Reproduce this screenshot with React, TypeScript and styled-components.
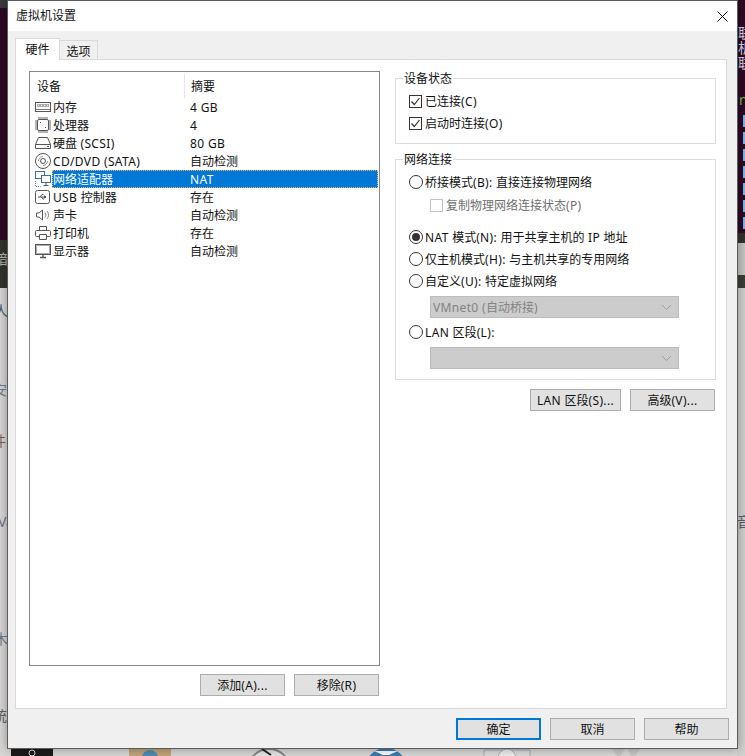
import React from "react";
import styled, { createGlobalStyle } from "styled-components";

const GlobalStyle = createGlobalStyle`
  html, body { margin: 0; padding: 0; background: #d6d6d6; }
  body { font-family: "Noto Sans", "Noto Sans CJK SC", sans-serif; font-size: 12px; color: #111; }
`;

const Desktop = styled.div`
  position: relative;
  width: 745px;
  height: 756px;
  overflow: hidden;
  background: #d8d8d6;
`;
const LeftStrip = styled.div`
  position: absolute;
  left: 0;
  top: 0;
  width: 8px;
  height: 756px;
  background: linear-gradient(#3a3a3a 0 8px, #2c0a24 8px 240px, #33332e 240px 288px, #d8d7d5 288px);
`;
const RightStrip = styled.div`
  position: absolute;
  right: 0;
  top: 0;
  width: 8px;
  height: 756px;
  background: linear-gradient(#2c0a24 0 233px, #34342f 233px 243px, #c6c6c4 243px 275px, #3c3c37 275px 288px, #d0d0ce 288px);
`;
const BlueBars = styled.div`
  position: absolute;
  right: 0;
  top: 115px;
  width: 2px;
  height: 114px;
  background: repeating-linear-gradient(#7fb6e6 0 12px, transparent 12px 17px);
`;
const Fragment = styled.span<{ $x: number; $y: number; $c: string }>`
  position: absolute;
  left: ${(p) => p.$x}px;
  top: ${(p) => p.$y}px;
  color: ${(p) => p.$c};
  font-size: 14px;
  line-height: 15px;
  white-space: pre;
`;
const DockIcon = styled.svg<{ $x: number }>`
  position: absolute;
  left: ${(p) => p.$x}px;
  top: 748px;
`;

const Dialog = styled.div`
  position: absolute;
  left: 7px;
  top: 0;
  width: 731px;
  height: 749px;
  box-sizing: border-box;
  border: 1px solid #5c5c5c;
  background: #f0f0f0;
  box-shadow: 0 0 10px rgba(0, 0, 0, 0.35);
  display: flex;
  flex-direction: column;
`;
const TitleBar = styled.div`
  height: 30px;
  flex: none;
  background: #fff;
  display: flex;
  align-items: center;
  justify-content: space-between;
  padding: 0 9px 0 8px;
`;
const Title = styled.span`
  font-size: 12px;
  line-height: 16px;
  color: #111;
`;
const Body = styled.div`
  flex: 1;
  display: flex;
  flex-direction: column;
  padding: 7px 8px 8px 7px;
  min-height: 0;
`;
const Tabs = styled.div`
  display: flex;
  align-items: flex-end;
  height: 21px;
  flex: none;
`;
const Tab = styled.div<{ $active?: boolean }>`
  box-sizing: border-box;
  position: relative;
  z-index: ${(p) => (p.$active ? 2 : 1)};
  height: ${(p) => (p.$active ? 22 : 19)}px;
  margin-bottom: ${(p) => (p.$active ? -1 : 0)}px;
  width: ${(p) => (p.$active ? 45 : 38)}px;
  background: ${(p) => (p.$active ? "#fff" : "#f0f0f0")};
  border: 1px solid #d9d9d9;
  border-bottom: none;
  border-left: ${(p) => (p.$active ? "1px solid #d9d9d9" : "none")};
  display: flex;
  align-items: center;
  justify-content: center;
  line-height: 16px;
  padding-top: ${(p) => (p.$active ? 0 : 3)}px;
`;
const Panel = styled.div`
  flex: 1;
  min-height: 0;
  margin-right: 2px;
  background: #fff;
  border: 1px solid #d9d9d9;
  padding: 11px 10px 12px 13px;
  display: grid;
  grid-template-columns: 351px 321px;
  column-gap: 15px;
`;
const LeftColumn = styled.div`
  display: flex;
  flex-direction: column;
  min-height: 0;
`;
const DeviceList = styled.div`
  flex: 1;
  box-sizing: border-box;
  border: 1px solid #828790;
  background: #fff;
`;
const ListHeader = styled.div`
  height: 26px;
  display: flex;
  align-items: center;
`;
const HeaderCell = styled.div<{ $width?: number }>`
  box-sizing: border-box;
  height: 24px;
  margin-top: 1px;
  line-height: 26px;
  width: ${(p) => (p.$width ? `${p.$width}px` : "auto")};
  padding-left: ${(p) => (p.$width ? 7 : 6)}px;
  border-right: ${(p) => (p.$width ? "1px solid #e5e5e5" : "none")};
`;
const Row = styled.div`
  height: 18px;
  display: flex;
  align-items: center;
`;
const IconSlot = styled.div`
  width: 22px;
  height: 16px;
  flex: none;
  display: flex;
  justify-content: flex-end;
  padding-right: 1px;
  box-sizing: border-box;
`;
const RowBody = styled.div<{ $selected?: boolean }>`
  flex: 1;
  height: 18px;
  margin-right: 1px;
  box-sizing: border-box;
  display: flex;
  align-items: center;
  padding-top: 2px;
  line-height: 16px;
  background: ${(p) => (p.$selected ? "#0078d7" : "transparent")};
  color: ${(p) => (p.$selected ? "#fff" : "#111")};
  outline: ${(p) => (p.$selected ? "1px dotted #f3b27a" : "none")};
  outline-offset: -1px;
`;
const DeviceName = styled.span`
  width: 138px;
  flex: none;
  padding-left: 1px;
  box-sizing: border-box;
  white-space: nowrap;
`;
const Summary = styled.span`
  white-space: nowrap;
`;
const Latin = styled.span`
  letter-spacing: 0.35px;
`;
const ListActions = styled.div`
  display: flex;
  justify-content: flex-end;
  gap: 9px;
  margin-top: 8px;
  padding-right: 1px;
`;
const Button = styled.button<{ $width: number; $primary?: boolean }>`
  width: ${(p) => p.$width}px;
  height: 22px;
  box-sizing: border-box;
  padding: 2px 0 0;
  margin: 0;
  font: inherit;
  font-size: 12px;
  line-height: 16px;
  color: #111;
  background: #e1e1e1;
  border: ${(p) => (p.$primary ? "2px solid #0078d7" : "1px solid #adadad")};
  white-space: nowrap;
`;
const RightColumn = styled.div`
  padding-top: 7px;
  display: flex;
  flex-direction: column;
`;
const Group = styled.div<{ $height: number; $gap?: number }>`
  position: relative;
  box-sizing: border-box;
  height: ${(p) => p.$height}px;
  margin-top: ${(p) => p.$gap ?? 0}px;
  border: 1px solid #dcdcdc;
  padding: 11px 0 0 13px;
`;
const Legend = styled.span`
  position: absolute;
  left: 7px;
  top: -8px;
  padding: 0 1px;
  background: #fff;
  line-height: 16px;
`;
const Option = styled.div<{ $indent?: number; $top?: number; $disabled?: boolean }>`
  height: 22px;
  display: flex;
  align-items: center;
  gap: 2px;
  margin-left: ${(p) => p.$indent ?? 0}px;
  margin-top: ${(p) => p.$top ?? 0}px;
  color: ${(p) => (p.$disabled ? "#6f6f6f" : "#111")};
  white-space: nowrap;
  line-height: 16px;
`;
const OptionText = styled.span`
  padding-top: 2px;
`;
const CheckBox = styled.span<{ $disabled?: boolean }>`
  width: 13px;
  height: 13px;
  box-sizing: border-box;
  border: 1px solid ${(p) => (p.$disabled ? "#c4c4c4" : "#333")};
  background: #fff;
  display: inline-flex;
  margin-right: 1px;
  flex: none;
`;
const Radio = styled.span<{ $checked?: boolean }>`
  width: 14px;
  height: 14px;
  box-sizing: border-box;
  border: 1px solid #333;
  border-radius: 50%;
  background: #fff;
  display: inline-flex;
  align-items: center;
  justify-content: center;
  flex: none;
  &::after {
    content: "";
    width: 8px;
    height: 8px;
    border-radius: 50%;
    background: ${(p) => (p.$checked ? "#333" : "transparent")};
  }
`;
const DisabledSelect = styled.div`
  box-sizing: border-box;
  width: 249px;
  height: 22px;
  margin: 4px 0 0 21px;
  border: 1px solid #bcbcbc;
  background: #cccccc;
  color: #838383;
  display: flex;
  align-items: center;
  justify-content: space-between;
  padding: 0 6px 0 2px;
  white-space: nowrap;
  line-height: 16px;
`;
const GroupActions = styled.div`
  display: flex;
  justify-content: flex-end;
  gap: 9px;
  margin-top: 9px;
  padding-right: 1px;
`;
const Footer = styled.div`
  display: flex;
  justify-content: flex-end;
  gap: 9px;
  margin-top: 9px;
  flex: none;
`;

const Mixed = ({ text }: { text: string }) => (
  <>
    {text.split(/([\x00-\x7f]+)/).map((part, i) =>
      i % 2 === 1 ? <Latin key={i}>{part}</Latin> : part
    )}
  </>
);

type IconProps = { children: React.ReactNode };
const Glyph = ({ children }: IconProps) => (
  <svg width="16" height="16" viewBox="0 0 16 16" fill="none" stroke="#555" strokeWidth="1">
    {children}
  </svg>
);

const icons: Record<string, React.ReactNode> = {
  memory: (
    <Glyph>
      <rect x="0.5" y="3.5" width="15" height="9" />
      <rect x="2" y="5" width="12" height="3" fill="#aaa" stroke="none" />
      <path d="M3 6.5h1M6 6.5h1M9 6.5h1M12 6.5h1" stroke="#fff" />
      <path d="M1 10.5h14" stroke="#777" />
    </Glyph>
  ),
  cpu: (
    <Glyph>
      <rect x="2.5" y="2.5" width="11" height="11" rx="1.5" />
      <path d="M4 0v2M6 0v2M8 0v2M10 0v2M12 0v2M4 14v2M6 14v2M8 14v2M10 14v2M12 14v2M0 4h2M0 6h2M0 8h2M0 10h2M0 12h2M14 4h2M14 6h2M14 8h2M14 10h2M14 12h2" stroke="#666" />
      <path d="M5 5h1v1H5zM10 10h1v1h-1z" fill="#444" stroke="none" />
    </Glyph>
  ),
  disk: (
    <Glyph>
      <path d="M3.5 2.5h9l3 7v4h-15v-4z" />
      <path d="M0.5 9.5h15" />
      <path d="M12 11.5h2" />
    </Glyph>
  ),
  cd: (
    <Glyph>
      <circle cx="8" cy="8" r="7.5" />
      <circle cx="8" cy="8" r="2.5" />
      <path d="M3.5 8a4.5 4.5 0 0 1 4.5-4.5" stroke="#999" />
      <path d="M12.5 8a4.5 4.5 0 0 1-4.5 4.5" stroke="#999" />
    </Glyph>
  ),
  network: (
    <Glyph>
      <rect x="0.5" y="0.5" width="9" height="7" stroke="#3f6f9f" />
      <rect x="6.5" y="4.5" width="9" height="7" fill="#fff" stroke="#3f6f9f" />
      <path d="M11 12v2M8.5 14.5h5" />
      <path d="M0.5 10v5.5h5" strokeDasharray="1 1" stroke="#777" />
    </Glyph>
  ),
  usb: (
    <Glyph>
      <rect x="0.5" y="1.5" width="14" height="13" rx="2" />
      <path d="M3 8h8M11 8l-1.5-1.2v2.4zM5 8l2-2.5h1.5M6.5 8l1.5 2h1" />
    </Glyph>
  ),
  sound: (
    <Glyph>
      <path d="M1.5 6v4h2.5l3.5 3V3L4 6z" />
      <path d="M10 5.5a4 4 0 0 1 0 5M12 4a6 6 0 0 1 0 8" stroke="#888" />
    </Glyph>
  ),
  printer: (
    <Glyph>
      <path d="M4.5 5V1.5h7V5" />
      <rect x="0.5" y="5.5" width="15" height="6" rx="1" />
      <path d="M4.5 9.5h7v5h-7z" fill="#fff" />
    </Glyph>
  ),
  display: (
    <Glyph>
      <rect x="0.5" y="1.5" width="15" height="10" />
      <path d="M1.5 2.5h13v8h-13z" stroke="#aaa" />
      <path d="M5 14.5h6M8 12v2" strokeWidth="1.4" />
    </Glyph>
  ),
};

const devices = [
  { icon: "memory", name: "内存", summary: "4 GB" },
  { icon: "cpu", name: "处理器", summary: "4" },
  { icon: "disk", name: "硬盘 (SCSI)", summary: "80 GB" },
  { icon: "cd", name: "CD/DVD (SATA)", summary: "自动检测" },
  { icon: "network", name: "网络适配器", summary: "NAT", selected: true },
  { icon: "usb", name: "USB 控制器", summary: "存在" },
  { icon: "sound", name: "声卡", summary: "自动检测" },
  { icon: "printer", name: "打印机", summary: "存在" },
  { icon: "display", name: "显示器", summary: "自动检测" },
];

const Tick = () => (
  <svg width="11" height="11" viewBox="0 0 11 11" fill="none" stroke="#333" strokeWidth="1.2">
    <path d="M1.5 5.5l2.8 3 5.2-6.5" />
  </svg>
);
const Chevron = () => (
  <svg width="11" height="7" viewBox="0 0 11 7" fill="none" stroke="#a2a2a2" strokeWidth="1">
    <path d="M1 1l4.5 4.5L10 1" />
  </svg>
);

export default function App() {
  return (
    <Desktop>
      <GlobalStyle />
      <LeftStrip />
      <RightStrip />
      <BlueBars />
      <Fragment $x={-6} $y={251} $c="#b8b4a8">暗</Fragment>
      <Fragment $x={-6} $y={303} $c="#4a5a70">人</Fragment>
      <Fragment $x={-7} $y={382} $c="#707a88">安</Fragment>
      <Fragment $x={-8} $y={433} $c="#7a6058">件</Fragment>
      <Fragment $x={-2} $y={514} $c="#6a7484">Va</Fragment>
      <Fragment $x={-6} $y={631} $c="#707a88">木</Fragment>
      <Fragment $x={-7} $y={708} $c="#66625c">统</Fragment>
      <Fragment $x={737} $y={514} $c="#5a5f70">音</Fragment>
      <Fragment $x={738} $y={25} $c="#d8dce4">{"联\n析\n联"}</Fragment>
      <Fragment $x={739} $y={92} $c="#6ec04a">n</Fragment>
      <DockIcon $x={11} width="42" height="8" viewBox="0 0 42 8">
        <rect width="42" height="8" fill="#1b1b1b" />
        <circle cx="21" cy="5" r="3" fill="none" stroke="#ddd" />
      </DockIcon>
      <DockIcon $x={129} width="42" height="8" viewBox="0 0 42 8">
        <rect width="42" height="8" fill="#c2a57a" />
        <circle cx="21" cy="10" r="8" fill="#4d8db8" />
      </DockIcon>
      <DockIcon $x={247} width="44" height="8" viewBox="0 0 44 8">
        <circle cx="22" cy="22" r="21" fill="#e6e6e6" stroke="#888" strokeWidth="2" />
        <path d="M15 1l9 6" stroke="#222" strokeWidth="2" />
      </DockIcon>
      <DockIcon $x={365} width="42" height="8" viewBox="0 0 42 8">
        <circle cx="21" cy="21" r="21" fill="#3a7db5" />
        <path d="M9 3h24l-9 4h-6z" fill="#fff" />
      </DockIcon>
      <DockIcon $x={483} width="48" height="8" viewBox="0 0 48 8">
        <path d="M1 8V2h46v6" fill="#dcdcdc" stroke="#aaa" />
        <circle cx="24" cy="10" r="9" fill="#eee" stroke="#aaa" />
      </DockIcon>
      <DockIcon $x={608} width="36" height="8" viewBox="0 0 36 8">
        <path d="M3 0l6 8h4l4-8zM19 0l4 8h4l6-8z" fill="#c8c8c8" />
      </DockIcon>

      <Dialog>
        <TitleBar>
          <Title>虚拟机设置</Title>
          <svg width="11" height="11" viewBox="0 0 11 11" stroke="#111" strokeWidth="1">
            <path d="M0.5 0.5l10 10M10.5 0.5l-10 10" />
          </svg>
        </TitleBar>
        <Body>
          <Tabs>
            <Tab $active>硬件</Tab>
            <Tab>选项</Tab>
          </Tabs>
          <Panel>
            <LeftColumn>
              <DeviceList>
                <ListHeader>
                  <HeaderCell $width={155}>设备</HeaderCell>
                  <HeaderCell>摘要</HeaderCell>
                </ListHeader>
                {devices.map((d) => (
                  <Row key={d.name}>
                    <IconSlot>{icons[d.icon]}</IconSlot>
                    <RowBody $selected={d.selected}>
                      <DeviceName><Mixed text={d.name} /></DeviceName>
                      <Summary><Mixed text={d.summary} /></Summary>
                    </RowBody>
                  </Row>
                ))}
              </DeviceList>
              <ListActions>
                <Button $width={85}><Mixed text="添加(A)..." /></Button>
                <Button $width={85}><Mixed text="移除(R)" /></Button>
              </ListActions>
            </LeftColumn>
            <RightColumn>
              <Group $height={66}>
                <Legend>设备状态</Legend>
                <Option><CheckBox><Tick /></CheckBox><OptionText><Mixed text="已连接(C)" /></OptionText></Option>
                <Option><CheckBox><Tick /></CheckBox><OptionText><Mixed text="启动时连接(O)" /></OptionText></Option>
              </Group>
              <Group $height={221} $gap={15}>
                <Legend>网络连接</Legend>
                <Option><Radio /><OptionText><Mixed text="桥接模式(B): 直接连接物理网络" /></OptionText></Option>
                <Option $indent={21} $top={1} $disabled><CheckBox $disabled /><OptionText><Mixed text="复制物理网络连接状态(P)" /></OptionText></Option>
                <Option $top={10}><Radio $checked /><OptionText><Mixed text="NAT 模式(N): 用于共享主机的 IP 地址" /></OptionText></Option>
                <Option><Radio /><OptionText><Mixed text="仅主机模式(H): 与主机共享的专用网络" /></OptionText></Option>
                <Option><Radio /><OptionText><Mixed text="自定义(U): 特定虚拟网络" /></OptionText></Option>
                <DisabledSelect><OptionText><Mixed text="VMnet0 (自动桥接)" /></OptionText><Chevron /></DisabledSelect>
                <Option $top={3}><Radio /><OptionText><Mixed text="LAN 区段(L):" /></OptionText></Option>
                <DisabledSelect><span /><Chevron /></DisabledSelect>
              </Group>
              <GroupActions>
                <Button $width={91}><Mixed text="LAN 区段(S)..." /></Button>
                <Button $width={85}><Mixed text="高级(V)..." /></Button>
              </GroupActions>
            </RightColumn>
          </Panel>
          <Footer>
            <Button $width={85} $primary>确定</Button>
            <Button $width={85}>取消</Button>
            <Button $width={85}>帮助</Button>
          </Footer>
        </Body>
      </Dialog>
    </Desktop>
  );
}
